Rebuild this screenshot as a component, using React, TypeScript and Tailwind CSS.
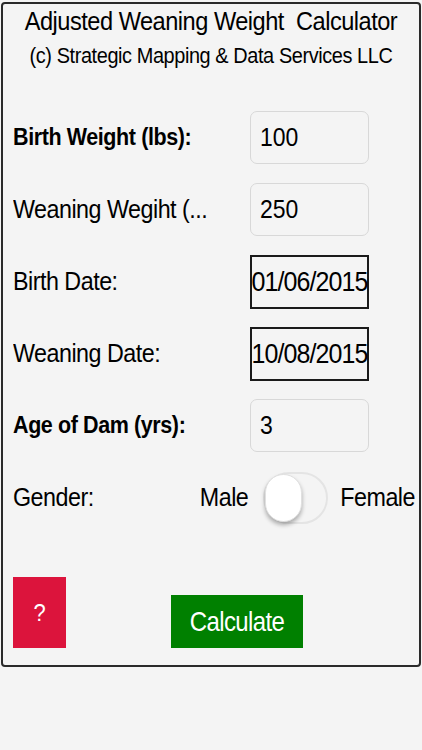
import { useState } from 'react';

const font = { fontFamily: '"Liberation Sans", Arial, sans-serif' };

function Row({ label, bold, children }: { label: string; bold?: boolean; children: React.ReactNode }) {
  return (
    <div className="flex items-center h-[53px]">
      <div className="w-[247px] pl-[10px]">
        <span
          className={`inline-block scale-y-[1.12] text-black ${bold ? 'font-bold text-[21.5px] tracking-[-0.4px]' : 'text-[23.3px] tracking-[-0.5px]'}`}
        >
          {label}
        </span>
      </div>
      {children}
    </div>
  );
}

function SoftInput({ value }: { value: string }) {
  return (
    <div className="w-[119px] h-[53px] rounded-[7px] border border-[#d8d8d8] bg-[#f4f4f4] flex items-center pl-[9px] text-black">
      <span className="inline-block scale-y-[1.12] text-[23px]">{value}</span>
    </div>
  );
}

function DateInput({ value }: { value: string }) {
  return (
    <div className="w-[119px] h-[54px] border-2 border-[#1a1a1a] flex items-center justify-center text-black">
      <span className="inline-block scale-y-[1.12] text-[25px] tracking-[-0.9px]">{value}</span>
    </div>
  );
}

export default function App() {
  const [female, setFemale] = useState(false);

  return (
    <div className="w-[422px] h-[750px] bg-[#f4f4f4] pt-[2px] px-[1px]" style={font}>
      <div className="h-[665px] border-2 border-[#2a2a2a] rounded-[4px] flex flex-col">
        <div className="text-center leading-[32px] mt-[1px] text-black">
          <span className="inline-block scale-y-[1.12] text-[23.6px] tracking-[-0.5px]">
            Adjusted Weaning Weight&nbsp; Calculator
          </span>
        </div>
        <div className="text-center leading-[26px] mt-[2px] text-black">
          <span className="inline-block scale-y-[1.12] text-[19.9px] tracking-[-0.4px]">
            (c) Strategic Mapping &amp; Data Services LLC
          </span>
        </div>

        <div className="flex flex-col gap-[19px] mt-[41px]">
          <Row label="Birth Weight (lbs):" bold>
            <SoftInput value="100" />
          </Row>
          <Row label="Weaning Wegiht (...">
            <SoftInput value="250" />
          </Row>
          <Row label="Birth Date:">
            <DateInput value="01/06/2015" />
          </Row>
          <Row label="Weaning Date:">
            <DateInput value="10/08/2015" />
          </Row>
          <Row label="Age of Dam (yrs):" bold>
            <SoftInput value="3" />
          </Row>
          <div className="flex items-center h-[53px]">
            <div className="flex-1 pl-[10px]">
              <span className="inline-block scale-y-[1.12] text-[23.3px] tracking-[-0.5px]">Gender:</span>
            </div>
            <span className="inline-block scale-y-[1.12] text-[23.3px] tracking-[-0.5px] mr-[15px]">Male</span>
            <button
              onClick={() => setFemale(!female)}
              className={`relative w-[65px] h-[52px] rounded-full border-2 ${female ? 'bg-[#4cd964] border-[#4cd964]' : 'bg-[#f4f4f4] border-[#e4e4e4]'}`}
            >
              <span
                className={`absolute top-0 w-[37px] h-[48px] rounded-full bg-white shadow-[0_3px_4px_rgba(0,0,0,0.3)] border border-[#e0e0e0] ${female ? 'right-0' : 'left-0'}`}
              />
            </button>
            <span className="inline-block scale-y-[1.12] text-[23.3px] tracking-[-0.5px] ml-[12px] mr-[4px]">Female</span>
          </div>
        </div>

        <div className="flex items-end mt-[53px]">
          <button className="ml-[10px] w-[53px] h-[71px] bg-[#dc143c] text-white flex items-center justify-center">
            <span className="inline-block scale-y-[1.12] text-[22px]">?</span>
          </button>
          <button className="ml-[105px] w-[132px] h-[53px] bg-[#008000] text-white flex items-center justify-center">
            <span className="inline-block scale-y-[1.12] text-[24px] tracking-[-0.6px]">Calculate</span>
          </button>
        </div>
      </div>
    </div>
  );
}
